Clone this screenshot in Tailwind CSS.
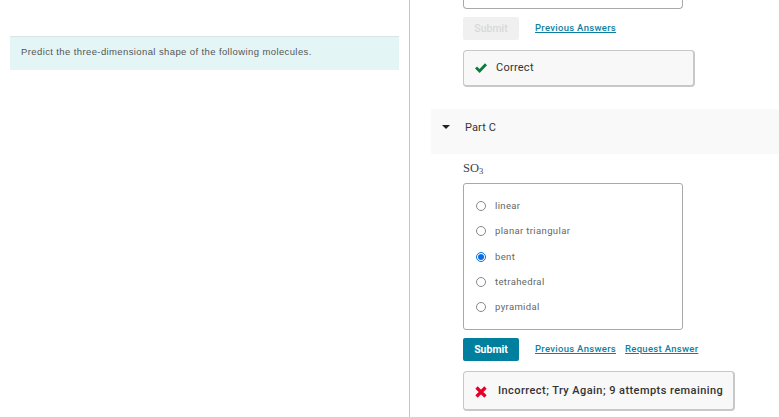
<!DOCTYPE html>
<html>
<head>
<meta charset="utf-8">
<script src="https://cdn.jsdelivr.net/npm/@tailwindcss/browser@4"></script>
</head>
<body class="bg-white overflow-hidden font-['Roboto',sans-serif]">
<div class="flex h-[417px] w-[779px] overflow-hidden">
    <!-- instructions column -->
    <div class="w-[410px] shrink-0 border-r border-[#c0c6cf] pl-[10px] pr-[10px] pt-[36px]">
        <div class="h-[34px] border-t border-[#dbe3e6] bg-[#e4f5f6] pl-[11px] pt-[9px] font-['Liberation_Sans',sans-serif] text-[9.5px] leading-[12px] tracking-[0.39px] text-[#555]">
            Predict the three-dimensional shape of the following molecules.
        </div>
    </div>

    <!-- parts column -->
    <div class="flex-1 pl-[21px]">
        <div class="pl-[32px]">
            <div class="h-[9px] w-[220px] rounded-b-[4px] border border-t-0 border-[#a8a8a8]"></div>
            <div class="mt-[8px] flex items-start">
                <button type="button" class="h-[23px] w-[56px] rounded-[2px] bg-[#f0f0f0] text-[10.5px] font-medium text-[#d9d9d9]">Submit</button>
                <a class="ml-[16px] mt-[5px] text-[9.5px] font-medium leading-[12px] tracking-[0.3px] text-[#0f7f9f] underline">Previous Answers</a>
            </div>
            <div class="mt-[10px] flex h-[37px] w-[232px] items-center rounded-[4px] border border-[#c8c8c8] border-b-2 border-r-2 bg-[#f8f8f8] pl-[11px]">
                <svg class="h-[10px] w-[12px]" viewBox="0 0 12 10"><path d="M1 4.5 L4.6 8 L11 1.2" fill="none" stroke="#0a7d3c" stroke-width="2.8"/></svg>
                <span class="ml-[9px] text-[11px] font-normal tracking-[0.25px] text-[#333]">Correct</span>
            </div>
        </div>

        <div class="mt-[22px] flex h-[45px] items-start bg-[#f9f9f9] pt-[12px]">
            <svg class="ml-[11px] mt-[4px] h-[4px] w-[8px]" viewBox="0 0 8 4"><path d="M0 0 H8 L4 4 Z" fill="#222"/></svg>
            <span class="ml-[15px] text-[11px] leading-[14px] tracking-[0.1px] text-[#333]">Part C</span>
        </div>

        <div class="pl-[32px]">
            <div class="mt-[6px] h-[17px] font-['Liberation_Serif',serif] text-[12.5px] leading-[17px] text-[#444]">SO<sub class="text-[8.5px]">3</sub></div>
            <div class="mt-[6px] flex h-[147px] w-[220px] flex-col rounded-[3px] border border-[#a8a8a8] pl-[12px] pt-[9.4px] text-[9.5px] tracking-[0.36px] text-[#666]">
                <label class="flex h-[25.3px] items-center"><span class="h-[10px] w-[10px] rounded-full border border-[#888] bg-white"></span><span class="ml-[9px]">linear</span></label>
                <label class="flex h-[25.3px] items-center"><span class="h-[10px] w-[10px] rounded-full border border-[#888] bg-white"></span><span class="ml-[9px]">planar triangular</span></label>
                <label class="flex h-[25.3px] items-center"><span class="flex h-[10px] w-[10px] items-center justify-center rounded-full border border-[#0a6fe0] bg-white"><span class="h-[6px] w-[6px] rounded-full bg-[#0a6fe0]"></span></span><span class="ml-[9px]">bent</span></label>
                <label class="flex h-[25.3px] items-center"><span class="h-[10px] w-[10px] rounded-full border border-[#888] bg-white"></span><span class="ml-[9px]">tetrahedral</span></label>
                <label class="flex h-[25.3px] items-center"><span class="h-[10px] w-[10px] rounded-full border border-[#888] bg-white"></span><span class="ml-[9px]">pyramidal</span></label>
            </div>
            <div class="mt-[8px] flex items-start">
                <button type="button" class="h-[23px] w-[56px] rounded-[2px] bg-[#007f9f] text-[10.5px] font-bold text-white">Submit</button>
                <a class="ml-[16px] mt-[5px] text-[9.5px] font-medium leading-[12px] tracking-[0.3px] text-[#0f7f9f] underline">Previous Answers</a>
                <a class="ml-[9px] mt-[5px] text-[9.5px] font-medium leading-[12px] tracking-[0.3px] text-[#0f7f9f] underline">Request Answer</a>
            </div>
            <div class="mt-[10px] flex h-[40px] w-[272px] items-center rounded-[4px] border border-[#c8c8c8] border-b-2 border-r-2 bg-[#f8f8f8] pl-[11px] pt-[2px]">
                <svg class="h-[12px] w-[12px]" viewBox="0 0 12 12"><path d="M1.5 1.5 L10.5 10.5 M10.5 1.5 L1.5 10.5" fill="none" stroke="#e4002b" stroke-width="3.2"/></svg>
                <span class="ml-[11px] whitespace-nowrap text-[11px] font-medium tracking-[0.44px] text-[#333]">Incorrect; Try Again; 9 attempts remaining</span>
            </div>
        </div>
    </div>
</div>
</body>
</html>
